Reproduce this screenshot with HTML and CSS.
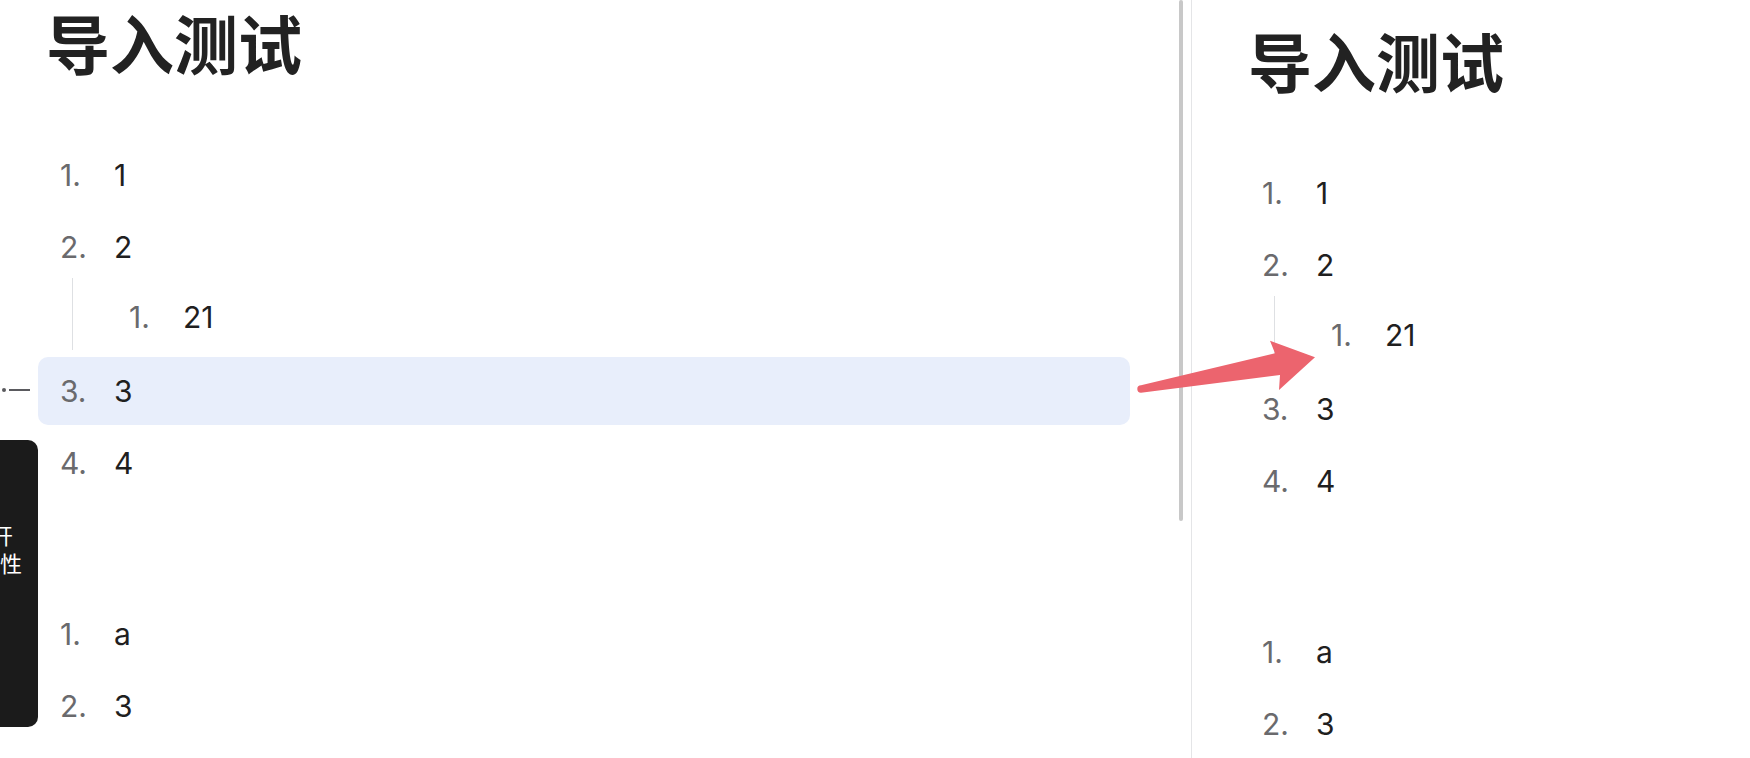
FILE: index.html
```html
<!DOCTYPE html>
<html lang="zh-CN">
<head>
<meta charset="utf-8">
<title>导入测试</title>
<link rel="stylesheet" href="styles.css">
</head>
<body>
<div class="app">
  <section class="pane pane-left">
    <div class="doc doc-scrolled">
      <h1 class="title">导入测试</h1>
      <ol class="list">
        <li class="item"><div class="row"><span class="num">1.</span><span class="txt">1</span></div></li>
        <li class="item"><div class="row"><span class="num">2.</span><span class="txt">2</span></div>
          <ol class="list nested">
            <li class="item"><div class="row"><span class="num">1.</span><span class="txt">21</span></div></li>
          </ol>
        </li>
        <li class="item"><div class="row selected"><span class="num">3.</span><span class="txt">3</span></div></li>
        <li class="item"><div class="row"><span class="num">4.</span><span class="txt">4</span></div></li>
      </ol>
      <ol class="list list-second">
        <li class="item"><div class="row"><span class="num">1.</span><span class="txt">a</span></div></li>
        <li class="item"><div class="row"><span class="num">2.</span><span class="txt">3</span></div></li>
      </ol>
    </div>
    <div class="handle"><span class="handle-dot"></span><span class="handle-line"></span></div>
    <div class="side-panel">
      <span class="side-line side-line-1">展开</span>
      <span class="side-line side-line-2">属性</span>
    </div>
  </section>
  <div class="scroll-track"><div class="scroll-thumb"></div></div>
  <div class="divider"></div>
  <section class="pane pane-right">
    <div class="doc">
      <h1 class="title">导入测试</h1>
      <ol class="list">
        <li class="item"><div class="row"><span class="num">1.</span><span class="txt">1</span></div></li>
        <li class="item"><div class="row"><span class="num">2.</span><span class="txt">2</span></div>
          <ol class="list nested">
            <li class="item"><div class="row"><span class="num">1.</span><span class="txt">21</span></div></li>
          </ol>
        </li>
        <li class="item"><div class="row"><span class="num">3.</span><span class="txt">3</span></div></li>
        <li class="item"><div class="row"><span class="num">4.</span><span class="txt">4</span></div></li>
      </ol>
      <ol class="list list-second">
        <li class="item"><div class="row"><span class="num">1.</span><span class="txt">a</span></div></li>
        <li class="item"><div class="row"><span class="num">2.</span><span class="txt">3</span></div></li>
      </ol>
    </div>
  </section>
  <svg class="arrow" width="200" height="70" viewBox="0 0 200 70" aria-hidden="true">
    <path d="M11 55.3 L145 23.3 L140 10.7 L185 27.3 L149 60 L150 45 L11 62.7 A3.7 3.7 0 0 1 11 55.3 Z" fill="#ec646e"/>
  </svg>
</div>
</body>
</html>
```

FILE: styles.css
```css
html, body {
  margin: 0;
  padding: 0;
  background: #ffffff;
}

body {
  width: 1750px;
  height: 758px;
  overflow: hidden;
}

.app {
  position: relative;
  display: flex;
  width: 1750px;
  height: 758px;
  overflow: hidden;
}

.pane {
  position: relative;
  height: 758px;
  overflow: hidden;
}

.pane-left {
  flex: 0 0 1179px;
}

.pane-right {
  flex: 1 1 auto;
}

.scroll-track {
  flex: 0 0 12px;
  height: 758px;
}

.scroll-thumb {
  width: 4px;
  height: 521px;
  background: #c8c8c8;
  border-radius: 2px;
}

.divider {
  flex: 0 0 1px;
  height: 758px;
  background: #e4e5e7;
}

.doc {
  padding: 14px 0 0 0;
}

.pane-left .doc {
  margin-left: 46px;
  width: 1084px;
}

.pane-right .doc {
  margin-left: 56px;
}

.doc-scrolled {
  margin-top: -18px;
}

.title {
  margin: 0 0 53px 0;
  font-family: "Noto Sans CJK SC", "Noto Sans", sans-serif;
  font-size: 64px;
  line-height: 90px;
  font-weight: 700;
  color: #222222;
}

.list {
  list-style: none;
  margin: 0;
  padding: 0;
}

.list-second {
  margin-top: 99px;
}

.item {
  padding: 2px 0;
}

.row {
  display: flex;
  align-items: center;
  height: 68px;
  margin-left: -8px;
  padding-left: 22px;
  border-radius: 10px;
  font-family: "Inter", "Noto Sans CJK SC", sans-serif;
  font-size: 30px;
  color: #1f1f1f;
}

.row.selected {
  background: #e8eefb;
}

.num {
  flex: 0 0 54px;
  color: #6a6a6d;
}

.txt {
  color: #1f1f1f;
}

.nested {
  margin: -3px 0 3px 26px;
  padding-left: 42px;
  border-left: 1px solid #dee0e3;
}

.nested .item {
  padding-top: 5px;
  padding-bottom: 0;
}

.nested .row {
  height: 67px;
}

.handle {
  position: absolute;
  left: 2px;
  top: 387px;
  display: flex;
  align-items: center;
  height: 6px;
}

.handle-dot {
  width: 4px;
  height: 4px;
  border-radius: 50%;
  background: #5a5a5e;
}

.handle-line {
  width: 21px;
  height: 2px;
  margin-left: 3px;
  background: #5a5a5e;
}

.side-panel {
  position: absolute;
  left: -52px;
  top: 440px;
  width: 90px;
  height: 287px;
  background: #1b1b1b;
  border-radius: 10px;
  display: flex;
  flex-direction: column;
  justify-content: flex-start;
  padding-top: 80px;
  box-sizing: border-box;
  font-family: "Noto Sans CJK SC", sans-serif;
  font-size: 22px;
  line-height: 28px;
  color: #ffffff;
}

.side-line {
  display: block;
  white-space: nowrap;
}

.side-line-1 {
  padding-left: 21px;
}

.side-line-2 {
  padding-left: 30px;
}

.arrow {
  position: absolute;
  left: 1130px;
  top: 330px;
}
```
